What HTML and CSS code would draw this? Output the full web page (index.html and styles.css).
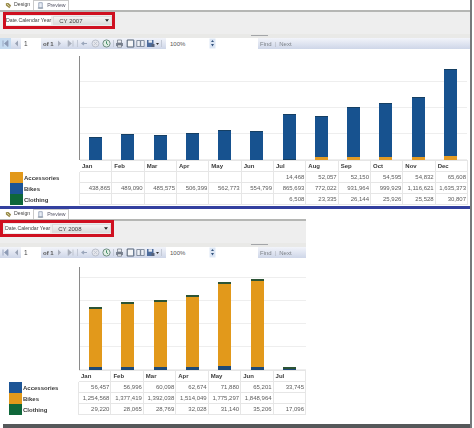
FILE: index.html
```html
<!DOCTYPE html>
<html lang="en">
<head>
<meta charset="utf-8">
<title>Report preview</title>
<link rel="stylesheet" href="styles.css">
</head>
<body>
<svg class="defs" width="0" height="0">
<symbol id="first" viewBox="0 0 9 9"><path d="M2 1.500v6M7 1.500 3.500 4.500 7 7.500z" fill="#8d9bb5" stroke="#8d9bb5" stroke-width=".8"/></symbol>
<symbol id="prev" viewBox="0 0 9 9"><path d="M6 1.500 3 4.500 6 7.500z" fill="#9aa3b5"/></symbol>
<symbol id="next" viewBox="0 0 9 9"><path d="M3 1.500 6 4.500 3 7.500z" fill="#a8aebb"/></symbol>
<symbol id="last" viewBox="0 0 9 9"><path d="M7 1.500v6M2 1.500 5.500 4.500 2 7.500z" fill="#a8aebb" stroke="#a8aebb" stroke-width=".6"/></symbol>
<symbol id="back" viewBox="0 0 9 9"><path d="M2 4.500h5M4 3 2 4.500 4 6" fill="none" stroke="#9aa6bb" stroke-width="1.200"/></symbol>
<symbol id="stop" viewBox="0 0 9 9"><circle cx="4.500" cy="4.500" r="3.500" fill="#e4e6ec" stroke="#b9bfcb"/><path d="M3 3l3 3M6 3 3 6" stroke="#b9bfcb" stroke-width=".7"/></symbol>
<symbol id="refresh" viewBox="0 0 9 9"><circle cx="4.500" cy="4.500" r="3.600" fill="#e2efe6" stroke="#6f8f80"/><path d="M4.500 2.300v2.400l1.500 1" fill="none" stroke="#3f8d63"/></symbol>
<symbol id="print" viewBox="0 0 9 9"><path d="M1 4h7v3H1z" fill="#7d8593"/><path d="M2.500 1h4v3h-4zM2.500 6h4v2.200h-4z" fill="#eceef2" stroke="#59616f" stroke-width=".6"/></symbol>
<symbol id="layout" viewBox="0 0 9 9"><path d="M1.200 1h6.600v7H1.200z" fill="#f5f6f7" stroke="#4f5d70"/><path d="M7 1h1v7H7z" fill="#6d7f96"/></symbol>
<symbol id="pages" viewBox="0 0 9 9"><path d="M.8 1.500h3.500v6H.8zM4.700 1.500h3.500v6H4.700z" fill="#eef1f6" stroke="#5e6d83" stroke-width=".7"/></symbol>
<symbol id="save" viewBox="0 0 9 9"><path d="M1 1h6.500v7H1z" fill="#4d6c9c"/><path d="M2.500 1.200h3.500v2.500H2.500z" fill="#e8edf4"/><path d="M5.500 5h3v3h-3z" fill="#56627a"/></symbol>
<symbol id="drop" viewBox="0 0 5 9"><path d="M1 4h3L2.500 6z" fill="#333"/></symbol>
<symbol id="zoomdrop" viewBox="0 0 7 11"><path d="M.5 .5h6v10h-6z" fill="#dce6f4"/><path d="M3.500 2 5 4H2zM2 6h3L3.500 8.500z" fill="#35557f"/></symbol>
</svg>

<main class="window">

<section class="report report-wide">
  <nav class="tabs">
    <span class="tab"><svg class="tab-icon" viewBox="0 0 8 8"><path d="M1 1h3l3 3-2 3-4-3z" fill="#9a8a4c"/><path d="M2 2l3 3" stroke="#dfe2b0"/></svg>Design</span>
    <span class="tab tab-active"><svg class="tab-icon" viewBox="0 0 8 8"><path d="M2 .8h4v6H2z" fill="#e9eef6" stroke="#7e8ea8" stroke-width=".8"/><path d="M1 7h6" stroke="#7f8a99"/></svg>Preview</span>
  </nav>
  <div class="params">
    <div class="param-box">
      <span class="param-label">Date.Calendar Year</span>
      <span class="param-select">CY 2007<svg class="select-arrow" viewBox="0 0 5 3"><path d="M0 0h5L2.500 3z" fill="#222"/></svg></span>
    </div>
  </div>
  <div class="splitter"><i class="grip"></i></div>
  <div class="toolbar">
    <span class="tool tool-on"><svg><use href="#first"/></svg></span>
    <span class="tool tool-prev"><svg><use href="#prev"/></svg></span>
    <span class="page-input">1</span>
    <span class="of">of 1</span>
    <span class="tool"><svg><use href="#next"/></svg></span>
    <span class="tool"><svg><use href="#last"/></svg></span>
    <i class="sep"></i>
    <span class="tool"><svg><use href="#back"/></svg></span>
    <span class="tool"><svg><use href="#stop"/></svg></span>
    <span class="tool"><svg><use href="#refresh"/></svg></span>
    <i class="sep"></i>
    <span class="tool tool-tight"><svg><use href="#print"/></svg></span>
    <span class="tool tool-tight"><svg><use href="#layout"/></svg></span>
    <span class="tool tool-tight"><svg><use href="#pages"/></svg></span>
    <span class="tool tool-save"><svg><use href="#save"/></svg></span>
    <svg class="tool-drop"><use href="#drop"/></svg>
    <i class="sep"></i>
    <span class="zoom-box">100%<svg class="zoom-arrow"><use href="#zoomdrop"/></svg></span>
    <span class="blank"></span>
    <span class="find"><b>Find</b><i>|</i><b>Next</b></span>
  </div>
  <div class="chart chart-a">
    <div class="bar-slot"><div class="bar" style="height:23px"><i class="seg cap-blue"></i><i class="seg blue"></i></div></div>
    <div class="bar-slot"><div class="bar" style="height:26px"><i class="seg cap-blue"></i><i class="seg blue"></i></div></div>
    <div class="bar-slot"><div class="bar" style="height:25px"><i class="seg cap-blue"></i><i class="seg blue"></i></div></div>
    <div class="bar-slot"><div class="bar" style="height:27px"><i class="seg cap-blue"></i><i class="seg blue"></i></div></div>
    <div class="bar-slot"><div class="bar" style="height:30px"><i class="seg cap-blue"></i><i class="seg blue"></i></div></div>
    <div class="bar-slot"><div class="bar" style="height:29px"><i class="seg cap-blue"></i><i class="seg blue"></i></div></div>
    <div class="bar-slot"><div class="bar" style="height:46px"><i class="seg cap-blue"></i><i class="seg blue"></i><i class="seg cap-blue"></i></div></div>
    <div class="bar-slot"><div class="bar" style="height:44px"><i class="seg cap-blue"></i><i class="seg blue"></i><i class="seg orange" style="height:3px"></i></div></div>
    <div class="bar-slot"><div class="bar" style="height:53px"><i class="seg cap-blue"></i><i class="seg blue"></i><i class="seg orange" style="height:3px"></i></div></div>
    <div class="bar-slot"><div class="bar" style="height:57px"><i class="seg cap-blue"></i><i class="seg blue"></i><i class="seg orange" style="height:3px"></i></div></div>
    <div class="bar-slot"><div class="bar" style="height:63px"><i class="seg cap-blue"></i><i class="seg blue"></i><i class="seg orange" style="height:3px"></i></div></div>
    <div class="bar-slot"><div class="bar" style="height:91px"><i class="seg cap-blue"></i><i class="seg blue"></i><i class="seg orange" style="height:4px"></i></div></div>
  </div>
  <div class="matrix matrix-a">
    <span class="corner"></span>
    <span class="month">Jan</span><span class="month">Feb</span><span class="month">Mar</span><span class="month">Apr</span><span class="month">May</span><span class="month">Jun</span><span class="month">Jul</span><span class="month">Aug</span><span class="month">Sep</span><span class="month">Oct</span><span class="month">Nov</span><span class="month">Dec</span>

    <span class="legend"><i class="swatch orange"></i>Accessories</span>
    <span class="num"></span><span class="num"></span><span class="num"></span><span class="num"></span><span class="num"></span><span class="num"></span><span class="num">14,468</span><span class="num">52,057</span><span class="num">52,150</span><span class="num">54,595</span><span class="num">54,832</span><span class="num">65,608</span>

    <span class="legend"><i class="swatch blue"></i>Bikes</span>
    <span class="num">438,865</span><span class="num">489,090</span><span class="num">485,575</span><span class="num">506,399</span><span class="num">562,773</span><span class="num">554,799</span><span class="num">865,693</span><span class="num">772,022</span><span class="num">931,964</span><span class="num">999,929</span><span class="num">1,116,621</span><span class="num">1,635,373</span>

    <span class="legend"><i class="swatch green"></i>Clothing</span>
    <span class="num"></span><span class="num"></span><span class="num"></span><span class="num"></span><span class="num"></span><span class="num"></span><span class="num">6,508</span><span class="num">23,335</span><span class="num">26,144</span><span class="num">25,926</span><span class="num">25,528</span><span class="num">30,807</span>
  </div>
</section>

<hr class="divider">

<section class="report report-narrow">
  <nav class="tabs">
    <span class="tab"><svg class="tab-icon" viewBox="0 0 8 8"><path d="M1 1h3l3 3-2 3-4-3z" fill="#9a8a4c"/><path d="M2 2l3 3" stroke="#dfe2b0"/></svg>Design</span>
    <span class="tab tab-active"><svg class="tab-icon" viewBox="0 0 8 8"><path d="M2 .8h4v6H2z" fill="#e9eef6" stroke="#7e8ea8" stroke-width=".8"/><path d="M1 7h6" stroke="#7f8a99"/></svg>Preview</span>
  </nav>
  <div class="params">
    <div class="param-box">
      <span class="param-label">Date.Calendar Year</span>
      <span class="param-select">CY 2008<svg class="select-arrow" viewBox="0 0 5 3"><path d="M0 0h5L2.500 3z" fill="#222"/></svg></span>
    </div>
  </div>
  <div class="splitter"><i class="grip"></i></div>
  <div class="toolbar">
    <span class="tool"><svg><use href="#first"/></svg></span>
    <span class="tool tool-prev"><svg><use href="#prev"/></svg></span>
    <span class="page-input">1</span>
    <span class="of">of 1</span>
    <span class="tool"><svg><use href="#next"/></svg></span>
    <span class="tool"><svg><use href="#last"/></svg></span>
    <i class="sep"></i>
    <span class="tool"><svg><use href="#back"/></svg></span>
    <span class="tool"><svg><use href="#stop"/></svg></span>
    <span class="tool"><svg><use href="#refresh"/></svg></span>
    <i class="sep"></i>
    <span class="tool tool-tight"><svg><use href="#print"/></svg></span>
    <span class="tool tool-tight"><svg><use href="#layout"/></svg></span>
    <span class="tool tool-tight"><svg><use href="#pages"/></svg></span>
    <span class="tool tool-save"><svg><use href="#save"/></svg></span>
    <svg class="tool-drop"><use href="#drop"/></svg>
    <i class="sep"></i>
    <span class="zoom-box">100%<svg class="zoom-arrow"><use href="#zoomdrop"/></svg></span>
    <span class="blank"></span>
    <span class="find"><b>Find</b><i>|</i><b>Next</b></span>
  </div>
  <div class="chart chart-b">
    <div class="bar-slot"><div class="bar" style="height:63px"><i class="seg cap-green"></i><i class="seg orange2"></i><i class="seg navy" style="height:3px"></i></div></div>
    <div class="bar-slot"><div class="bar" style="height:68px"><i class="seg cap-green"></i><i class="seg orange2"></i><i class="seg navy" style="height:3px"></i></div></div>
    <div class="bar-slot"><div class="bar" style="height:70px"><i class="seg cap-green"></i><i class="seg orange2"></i><i class="seg navy" style="height:3px"></i></div></div>
    <div class="bar-slot"><div class="bar" style="height:75px"><i class="seg cap-green"></i><i class="seg orange2"></i><i class="seg navy" style="height:3px"></i></div></div>
    <div class="bar-slot"><div class="bar" style="height:88px"><i class="seg cap-green"></i><i class="seg orange2"></i><i class="seg navy" style="height:4px"></i></div></div>
    <div class="bar-slot"><div class="bar" style="height:91px"><i class="seg cap-green"></i><i class="seg orange2"></i><i class="seg navy" style="height:3px"></i></div></div>
    <div class="bar-slot"><div class="bar" style="height:3px"><i class="seg cap-green"></i><i class="seg navy" style="height:2px"></i></div></div>
  </div>
  <div class="matrix matrix-b">
    <span class="corner"></span>
    <span class="month">Jan</span><span class="month">Feb</span><span class="month">Mar</span><span class="month">Apr</span><span class="month">May</span><span class="month">Jun</span><span class="month">Jul</span>

    <span class="legend"><i class="swatch blue"></i>Accessories</span>
    <span class="num">56,457</span><span class="num">56,996</span><span class="num">60,098</span><span class="num">62,674</span><span class="num">71,880</span><span class="num">65,201</span><span class="num">33,745</span>

    <span class="legend"><i class="swatch orange"></i>Bikes</span>
    <span class="num">1,254,568</span><span class="num">1,377,419</span><span class="num">1,392,038</span><span class="num">1,514,049</span><span class="num">1,775,297</span><span class="num">1,848,964</span><span class="num"></span>

    <span class="legend"><i class="swatch green"></i>Clothing</span>
    <span class="num">29,220</span><span class="num">28,065</span><span class="num">28,769</span><span class="num">32,028</span><span class="num">31,140</span><span class="num">35,206</span><span class="num">17,096</span>
  </div>
</section>

<div class="bottom-bar"></div>
</main>
</body>
</html>
```

FILE: styles.css
```css
* { box-sizing: border-box; }
html, body { margin: 0; padding: 0; background: #fff; }
body { font: 6px/1 "Liberation Sans", Arial, sans-serif; color: #555; overflow: hidden; }
.defs { position: absolute; }

.window {
  width: 472px;
  height: 428px;
  border-right: 2px solid #77797c;
  overflow: hidden;
  filter: blur(.35px);
}

/* Report frame */
.report-wide { height: 206px; }
.report-narrow { width: 306px; height: 215px; }

.tabs { display: flex; height: 10px; padding-left: 5px; font-size: 5.200px; }
.tab { display: flex; align-items: center; gap: 2px; height: 10px; color: #444; white-space: nowrap; }
.tab-active { margin-left: 3px; padding: 0 2px 0 3px; gap: 3px; border: 1px solid #c9c9c9; border-bottom: 0; background: #fff; color: #556; }
.tab-icon { width: 7px; height: 7px; }

.params { height: 24px; background: #eeeeee; border-top: 2px solid #b5b6b4; }
.param-box {
  display: flex;
  align-items: center;
  gap: 2px;
  width: 112px;
  height: 17px;
  margin-left: 3px;
  padding: 0;
  border: 3px solid #cf1020;
  background: #ececec;
}
.report-narrow .param-box { width: 114px; margin: -1px 0 0; padding-left: 2px; }
.param-label { background: #fff; padding: 2px 0; font-size: 5.200px; color: #444; white-space: nowrap; }
.param-select {
  display: flex;
  align-items: center;
  justify-content: space-between;
  flex: 1;
  height: 9px;
  padding: 0 2px 0 5px;
  color: #444;
  background: linear-gradient(#f4f4f4, #dcdcdc);
  border: 1px solid #ddd;
}
.select-arrow { width: 4px; height: 3px; }

.splitter { position: relative; height: 4px; background: #e9e9e7; }
.grip { position: absolute; left: 251px; top: 1px; width: 17px; height: 1px; background: #a3a5a8; }

.toolbar {
  display: flex;
  align-items: center;
  height: 11px;
  background: linear-gradient(#f2f4fa, #ced6e8);
  color: #555;
}
.tool { display: flex; align-items: center; justify-content: center; flex: none; width: 11px; height: 11px; }
.tool svg { width: 9px; height: 9px; }
.tool-on { background: #c6dbf0; }
.tool-prev { width: 10px; }
.tool-tight { width: 10.500px; }
.tool-save { width: 9px; }
.tool-drop { width: 5px; height: 9px; flex: none; }
.page-input { flex: none; width: 20px; height: 11px; line-height: 11px; padding-left: 3px; background: #fff; color: #444; font-size: 6.500px; }
.of { flex: none; width: 12.500px; padding-left: 2px; color: #555; font-weight: bold; white-space: nowrap; }
.sep { flex: none; width: 1px; height: 7px; margin: 0 1px; background: #c3c9d6; }
.zoom-box {
  display: flex;
  align-items: center;
  justify-content: space-between;
  flex: none;
  width: 51px;
  height: 11px;
  margin-left: 3px;
  padding: 0 1px 0 4px;
  background: #fff;
  color: #555;
}
.zoom-arrow { width: 7px; height: 11px; flex: none; }
.blank { flex: none; width: 41px; height: 11px; background: #fff; }
.find { display: flex; flex: 1; gap: 3px; align-items: center; padding-left: 2px; color: #7d8288; }
.find b { font-weight: normal; }
.find i { font-style: normal; color: #aeb3bb; }

/* Charts */
.chart {
  display: flex;
  align-items: flex-end;
  margin-left: 79px;
  border-left: 1px solid #8a8a8a;
  background-image: linear-gradient(#eeeeee 1px, transparent 1px);
  background-repeat: repeat-y;
}
.chart-a {
  width: 388px;
  height: 104px;
  margin-top: 7px;
  background-size: 100% 26px;
  background-position: 0 25px;
}
.chart-b {
  width: 227px;
  height: 103px;
  margin-top: 9px;
  background-size: 100% 23px;
  background-position: 0 10px;
}
.bar-slot { display: flex; justify-content: center; align-items: flex-end; flex: 1 1 0; height: 100%; }
.bar { display: flex; flex-direction: column; width: 13px; margin-right: 1px; }
.seg { display: block; flex: none; }
.blue { flex: 1; background: #17528f; }
.orange { background: #e39b24; }
.orange2 { flex: 1; background: #e2991b; }
.navy { background: #1e4a78; }
.cap-blue { height: 1px; background: #153f63; }
.cap-green { height: 2px; background: #2c5435; }

/* Data table */
.matrix { display: grid; grid-auto-rows: 11px; }
.matrix-a { grid-template-columns: 80px repeat(12, 1fr); width: 468px; grid-template-rows: 12px; }
.matrix-b { grid-template-columns: 79px repeat(7, 1fr); width: 306px; grid-template-rows: 12px; }
.corner { display: block; }
.month {
  padding: 2px 0 0 2px;
  font-weight: bold;
  color: #3a3a3a;
  border-right: 1px solid #e6e6e6;
  border-bottom: 1px solid #e6e6e6;
  border-top: 1px solid #e6e6e6;
}
.num {
  padding: 2px 1px 0 0;
  text-align: right;
  white-space: nowrap;
  color: #5c5c5c;
  border-right: 1px solid #e6e6e6;
  border-bottom: 1px solid #e6e6e6;
}
.legend {
  display: flex;
  align-items: center;
  gap: 1px;
  padding-left: 10px;
  font-weight: bold;
  color: #3a3a3a;
  border-right: 1px solid #e6e6e6;
  white-space: nowrap;
}
.matrix-b .legend { padding-left: 9px; }
.swatch { flex: none; width: 13px; height: 11px; }
.swatch.orange { background: #e2991b; }
.swatch.blue { background: #1d5596; }
.swatch.green { background: #0f673a; }

.divider { height: 3px; margin: 0; border: 0; background: #33409f; }
.bottom-bar { height: 4px; margin: 0 0 0 3px; background: #55585a; }
```
